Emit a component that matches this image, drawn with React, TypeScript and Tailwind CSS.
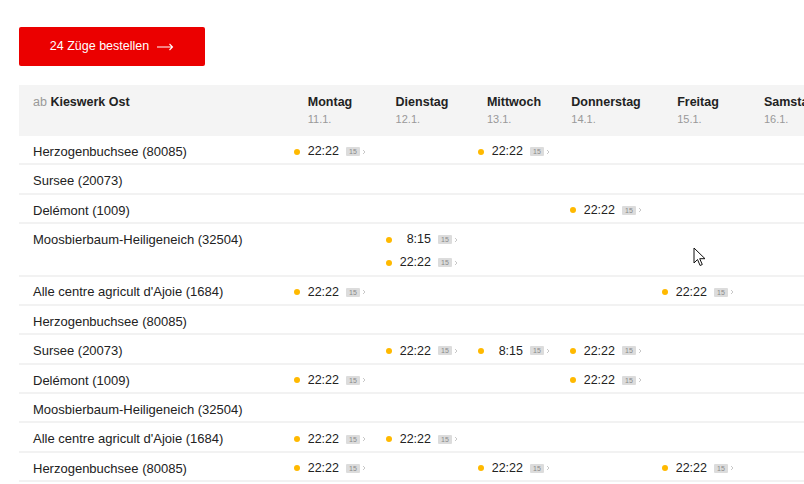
import { Fragment } from 'react';

type Row = { name: string; times: (string[] | null)[] };

const days = [
  { name: 'Montag', date: '11.1.' },
  { name: 'Dienstag', date: '12.1.' },
  { name: 'Mittwoch', date: '13.1.' },
  { name: 'Donnerstag', date: '14.1.' },
  { name: 'Freitag', date: '15.1.' },
  { name: 'Samstag', date: '16.1.' },
  { name: 'Sonntag', date: '17.1.' },
];

const rows: Row[] = [
  { name: 'Herzogenbuchsee (80085)', times: [['22:22'], null, ['22:22'], null, null, null, null] },
  { name: 'Sursee (20073)', times: [null, null, null, null, null, null, null] },
  { name: 'Delémont (1009)', times: [null, null, null, ['22:22'], null, null, null] },
  { name: 'Moosbierbaum-Heiligeneich (32504)', times: [null, ['8:15', '22:22'], null, null, null, null, null] },
  { name: "Alle centre agricult d'Ajoie (1684)", times: [['22:22'], null, null, null, ['22:22'], null, null] },
  { name: 'Herzogenbuchsee (80085)', times: [null, null, null, null, null, null, null] },
  { name: 'Sursee (20073)', times: [null, ['22:22'], ['8:15'], ['22:22'], null, null, null] },
  { name: 'Delémont (1009)', times: [['22:22'], null, null, ['22:22'], null, null, null] },
  { name: 'Moosbierbaum-Heiligeneich (32504)', times: [null, null, null, null, null, null, null] },
  { name: "Alle centre agricult d'Ajoie (1684)", times: [['22:22'], ['22:22'], null, null, null, null, null] },
  { name: 'Herzogenbuchsee (80085)', times: [['22:22'], null, ['22:22'], null, ['22:22'], null, null] },
];

function Departure({ time }: { time: string }) {
  return (
    <div className="h-[23px] flex items-center justify-center">
      <span className="w-[6px] h-[6px] rounded-full bg-[#ffb900]" />
      <span className="w-[34px] ml-[5px] text-right text-[12.5px] text-[#222]">{time}</span>
      <span className="ml-[7px] w-[14px] h-[9px] rounded-[1px] bg-[#dcdcdc] text-[7px] leading-[9px] text-[#8a8a8a] text-center">
        15
      </span>
      <svg className="ml-[2px]" width="4" height="6" viewBox="0 0 4 6">
        <path d="M1 1l2 2-2 2" fill="none" stroke="#c8c8c8" strokeWidth="1" />
      </svg>
    </div>
  );
}

export default function App() {
  return (
    <div className="relative w-full min-h-screen bg-white overflow-hidden font-['Liberation_Sans',Arial,sans-serif] pt-[27px] pl-[19px]">
      <button className="w-[186px] h-[39px] rounded-[2px] bg-[#eb0000] text-white text-[12.5px] flex items-center justify-center gap-[8px]">
        <span>24 Züge bestellen</span>
        <svg width="17" height="8" viewBox="0 0 17 8">
          <path d="M0 4h15.5M12.5 1l3 3-3 3" fill="none" stroke="white" strokeWidth="1.1" />
        </svg>
      </button>

      <div className="mt-[19px] w-[909px]">
        {/* Header */}
        <div className="grid grid-cols-[265px_repeat(7,92px)] h-[51px] bg-[#f4f4f4] pt-[10px]">
          <div className="pl-[14px] text-[12.5px] leading-[15px]">
            <span className="text-[#999]">ab </span>
            <span className="font-bold text-[#222]">Kieswerk Ost</span>
          </div>
          {days.map((d) => (
            <div key={d.name} className="flex justify-center">
              <div>
                <div className="font-bold text-[12.5px] leading-[15px] text-[#222]">{d.name}</div>
                <div className="text-[11px] leading-[13px] mt-[3px] text-[#999]">{d.date}</div>
              </div>
            </div>
          ))}
        </div>

        {/* Rows */}
        {rows.map((r, i) => (
          <div
            key={i}
            className="grid grid-cols-[265px_repeat(7,92px)] pt-[4.2px] pb-[0.2px] border-b-2 border-[#f2f2f2]"
          >
            <div className="pl-[14px] h-[23px] flex items-center text-[13px] text-[#222]">{r.name}</div>
            {r.times.map((t, j) => (
              <div key={j}>
                {t &&
                  t.map((time, k) => (
                    <Fragment key={k}>
                      <Departure time={time} />
                    </Fragment>
                  ))}
              </div>
            ))}
          </div>
        ))}
      </div>

      {/* Mouse cursor */}
      <svg className="absolute left-[693px] top-[247px]" width="13" height="20" viewBox="0 0 13 20">
        <path
          d="M1 1v15l3.5-3.5 2.6 6 2.2-1-2.6-5.8H12z"
          fill="white"
          stroke="#111"
          strokeWidth="1"
          strokeLinejoin="round"
        />
      </svg>
    </div>
  );
}
